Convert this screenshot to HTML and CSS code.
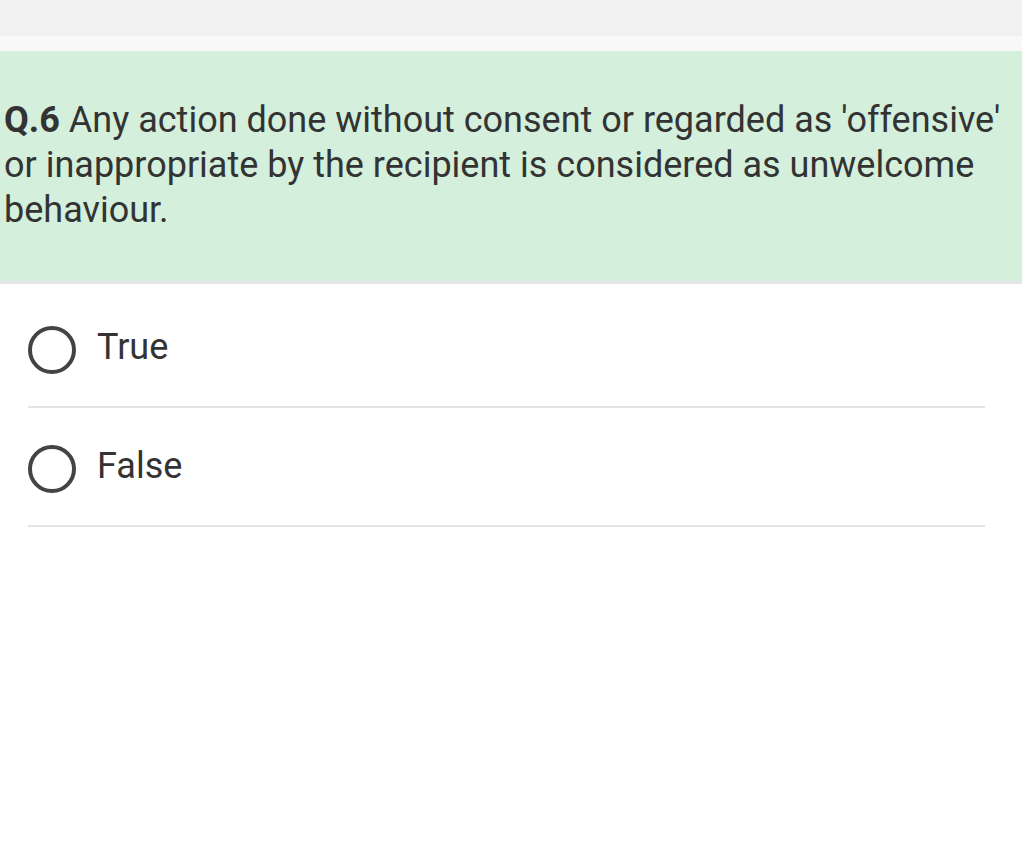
FILE: index.html
```html
<!DOCTYPE html>
<html>
<head>
<meta charset="utf-8">
<link rel="stylesheet" href="styles.css">
</head>
<body>
<div class="topbar"></div>
<div class="subbar"></div>
<div class="question">
  <p class="qtext"><b>Q.6</b> Any action done without consent or regarded as 'offensive' or inappropriate by the recipient is considered as unwelcome behaviour.</p>
</div>
<div class="options">
  <label class="option"><span class="radio"></span><span class="label">True</span></label>
  <label class="option"><span class="radio"></span><span class="label">False</span></label>
</div>
</body>
</html>
```
FILE: styles.css
```css
html, body {
  margin: 0;
  padding: 0;
  background: #ffffff;
  font-family: Roboto, "Liberation Sans", sans-serif;
  color: #333333;
}
.topbar {
  height: 36px;
  background: #f1f1f1;
}
.subbar {
  height: 15px;
  background: #f8f8f8;
}
.question {
  background: #d4efdb;
  padding: 47px 0 48px 4px;
  border-bottom: 3px solid #e6e6e6;
}
.qtext {
  margin: 0;
  font-size: 36px;
  line-height: 45px;
  color: #333333;
}
.qtext b {
  font-weight: 700;
}
.options {
  margin: 5px 37px 0 28px;
}
.option {
  display: flex;
  align-items: center;
  height: 109px;
  padding-top: 8px;
  border-bottom: 2px solid #e4e4e4;
}
.radio {
  width: 40px;
  height: 40px;
  border: 4px solid #444444;
  border-radius: 50%;
  flex: none;
  margin-top: -4px;
}
.label {
  margin-left: 21px;
  font-size: 36px;
  line-height: 40px;
  color: #333333;
  margin-top: -10px;
}
```
